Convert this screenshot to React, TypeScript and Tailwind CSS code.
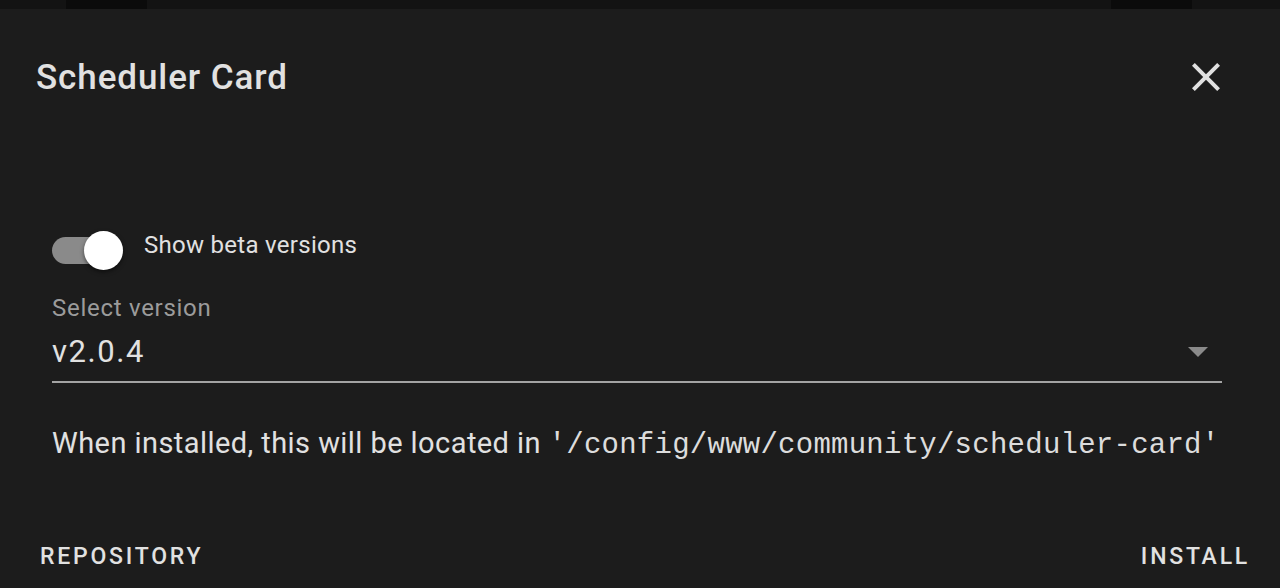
export default function App() {
    const roboto = { fontFamily: "Roboto, 'Liberation Sans', sans-serif" };
    return (
        <div
            className="flex h-[588px] w-full flex-col overflow-hidden bg-[#1c1c1c] text-[#e1e1e1]"
            style={roboto}
        >
            <div className="flex h-[9px] w-full shrink-0 flex-row bg-[#131313]">
                <div className="ml-[66px] h-full w-[81px] bg-[#0b0b0b]" />
                <div className="flex-1" />
                <div className="mr-[88px] h-full w-[81px] bg-[#0b0b0b]" />
            </div>

            <div className="mt-[44px] flex h-[48px] flex-row items-center pl-[36px] pr-[50px]">
                <h1 className="flex-1 text-[35px] font-medium leading-none tracking-[0.026em]">
                    Scheduler Card
                </h1>
                <svg width="48" height="48" viewBox="0 0 24 24" fill="#e1e1e1">
                    <path d="M19 6.41L17.59 5 12 10.59 6.41 5 5 6.41 10.59 12 5 17.59 6.41 19 12 13.41 17.59 19 19 17.59 13.41 12z" />
                </svg>
            </div>

            <div className="flex flex-col pl-[52px] pr-[58px]">
                <div className="mt-[124px] flex h-[40px] flex-row items-center">
                    <div className="relative h-[40px] w-[72px]">
                        <div className="absolute left-0 top-[12px] h-[27px] w-[70px] rounded-full bg-[#8a8a8a]" />
                        <div className="absolute left-[32px] top-[6px] h-[39px] w-[39px] rounded-full bg-white shadow-[0_2px_4px_rgba(0,0,0,0.5)]" />
                    </div>
                    <div className="ml-[20px] text-[24px] leading-none tracking-[0.012em]">
                        Show beta versions
                    </div>
                </div>

                <div className="mt-[31px] text-[24px] leading-none tracking-[0.03em] text-[#9b9b9b]">
                    Select version
                </div>
                <div className="mt-[16px] flex flex-row items-center">
                    <div className="flex-1 text-[31px] leading-none tracking-[0.05em]">
                        v2.0.4
                    </div>
                    <svg width="20" height="10" viewBox="0 0 20 10" className="mr-[14px]">
                        <polygon points="0,0 20,0 10,10" fill="#8a8a8a" />
                    </svg>
                </div>
                <div className="mt-[14px] h-[2px] w-full bg-[#a3a3a3]" />

                <div className="mt-[46px] flex flex-row items-baseline whitespace-nowrap">
                    <span className="text-[29px] leading-none tracking-[0.015em]">
                        When installed, this will be located in&nbsp;
                    </span>
                    <span
                        className="text-[29px] leading-none tracking-[0.25px] text-[#dcdcdc]"
                        style={{ fontFamily: "'Liberation Mono', monospace" }}
                    >
                        '/config/www/community/scheduler-card'
                    </span>
                </div>
            </div>

            <div className="mt-auto mb-[20px] flex flex-row items-center pl-[40px] pr-[30px]">
                <div className="flex-1 text-[23px] font-medium leading-none tracking-[0.12em]">
                    REPOSITORY
                </div>
                <div className="text-[23px] font-medium leading-none tracking-[0.12em]">
                    INSTALL
                </div>
            </div>
        </div>
    );
}
